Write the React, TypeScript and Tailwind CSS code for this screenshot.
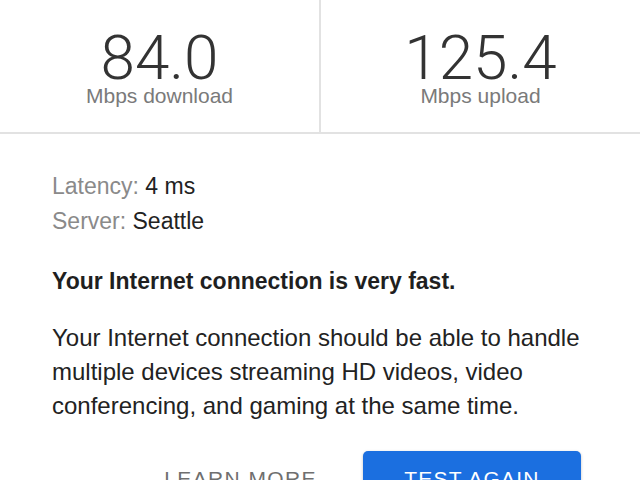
import React from "react";

export default function App() {
  return (
    <div className="w-[640px] h-[480px] overflow-hidden bg-white font-['Liberation_Sans',Arial,sans-serif] text-[#222]">
      <div className="flex h-[134px] border-b-2 border-[#e2e2e2]">
        <div className="flex-1 flex flex-col items-center pt-[30px] border-r-2 border-[#e2e2e2]">
          <div className="text-[62px] leading-[56px] font-light font-['Roboto',sans-serif] text-[#333]">84.0</div>
          <div className="text-[21px] leading-[20px] text-[#7a7a7a]">Mbps download</div>
        </div>
        <div className="flex-1 flex flex-col items-center pt-[30px]">
          <div className="text-[62px] leading-[56px] font-light font-['Roboto',sans-serif] text-[#333]">125.4</div>
          <div className="text-[21px] leading-[20px] text-[#7a7a7a]">Mbps upload</div>
        </div>
      </div>
      <div className="px-[52px] pt-[35px]">
        <div className="text-[23px] leading-[35px]">
          <div><span className="text-[#8a8a8a]">Latency:</span> 4 ms</div>
          <div><span className="text-[#8a8a8a]">Server:</span> Seattle</div>
        </div>
        <div className="mt-[25px] text-[23px] leading-[35px] font-bold text-[#1f1f1f]">Your Internet connection is very fast.</div>
        <div className="mt-[22px] text-[24px] leading-[34px] text-[#222]">
          Your Internet connection should be able to handle multiple devices streaming HD videos, video conferencing, and gaming at the same time.
        </div>
      </div>
      <div className="mt-[28px] flex justify-end items-start gap-[26px] pr-[59px]">
        <button className="h-[56px] px-[20px] text-[21px] tracking-[1.4px] text-[#6f6f6f] uppercase">Learn more</button>
        <button className="h-[56px] w-[218px] rounded-[5px] bg-[#1b6fe0] text-[21px] tracking-[1.2px] text-white uppercase shadow-[0_1px_3px_rgba(0,0,0,0.25)]">Test again</button>
      </div>
    </div>
  );
}
